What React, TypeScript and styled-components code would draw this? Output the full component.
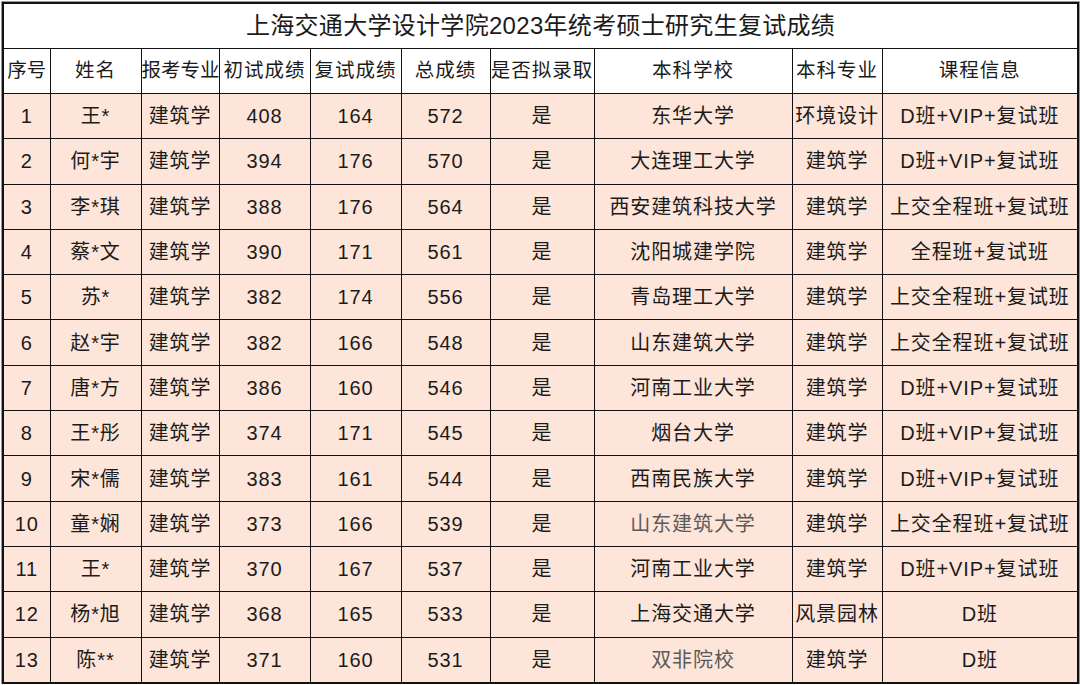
import React from 'react'
import styled, { createGlobalStyle } from 'styled-components'

const GlobalStyle = createGlobalStyle`
  html, body {
    margin: 0;
    padding: 0;
    background: #ffffff;
  }
  body {
    font-family: "Liberation Sans", "Noto Sans CJK SC", sans-serif;
  }
`

type Row = {
  no: number
  name: string
  major: string
  first: number
  retest: number
  total: number
  admit: string
  school: string
  schoolGray?: boolean
  degree: string
  course: string
}

const rows: Row[] = [
  { no: 1, name: '王*', major: '建筑学', first: 408, retest: 164, total: 572, admit: '是', school: '东华大学', degree: '环境设计', course: 'D班+VIP+复试班' },
  { no: 2, name: '何*宇', major: '建筑学', first: 394, retest: 176, total: 570, admit: '是', school: '大连理工大学', degree: '建筑学', course: 'D班+VIP+复试班' },
  { no: 3, name: '李*琪', major: '建筑学', first: 388, retest: 176, total: 564, admit: '是', school: '西安建筑科技大学', degree: '建筑学', course: '上交全程班+复试班' },
  { no: 4, name: '蔡*文', major: '建筑学', first: 390, retest: 171, total: 561, admit: '是', school: '沈阳城建学院', degree: '建筑学', course: '全程班+复试班' },
  { no: 5, name: '苏*', major: '建筑学', first: 382, retest: 174, total: 556, admit: '是', school: '青岛理工大学', degree: '建筑学', course: '上交全程班+复试班' },
  { no: 6, name: '赵*宇', major: '建筑学', first: 382, retest: 166, total: 548, admit: '是', school: '山东建筑大学', degree: '建筑学', course: '上交全程班+复试班' },
  { no: 7, name: '唐*方', major: '建筑学', first: 386, retest: 160, total: 546, admit: '是', school: '河南工业大学', degree: '建筑学', course: 'D班+VIP+复试班' },
  { no: 8, name: '王*彤', major: '建筑学', first: 374, retest: 171, total: 545, admit: '是', school: '烟台大学', degree: '建筑学', course: 'D班+VIP+复试班' },
  { no: 9, name: '宋*儒', major: '建筑学', first: 383, retest: 161, total: 544, admit: '是', school: '西南民族大学', degree: '建筑学', course: 'D班+VIP+复试班' },
  { no: 10, name: '童*娴', major: '建筑学', first: 373, retest: 166, total: 539, admit: '是', school: '山东建筑大学', schoolGray: true, degree: '建筑学', course: '上交全程班+复试班' },
  { no: 11, name: '王*', major: '建筑学', first: 370, retest: 167, total: 537, admit: '是', school: '河南工业大学', degree: '建筑学', course: 'D班+VIP+复试班' },
  { no: 12, name: '杨*旭', major: '建筑学', first: 368, retest: 165, total: 533, admit: '是', school: '上海交通大学', degree: '风景园林', course: 'D班' },
  { no: 13, name: '陈**', major: '建筑学', first: 371, retest: 160, total: 531, admit: '是', school: '双非院校', schoolGray: true, degree: '建筑学', course: 'D班' },
]

const columns = [
  { label: '序号', width: 47 },
  { label: '姓名', width: 91 },
  { label: '报考专业', width: 78 },
  { label: '初试成绩', width: 91 },
  { label: '复试成绩', width: 91 },
  { label: '总成绩', width: 89 },
  { label: '是否拟录取', width: 104 },
  { label: '本科学校', width: 198 },
  { label: '本科专业', width: 90 },
  { label: '课程信息', width: 196 },
]

const Page = styled.div`
  padding: 2px 0 0 2px;
`

const Table = styled.table`
  width: 1076px;
  table-layout: fixed;
  border-collapse: collapse;
  border: 2px solid #111;
  outline: 1px solid #9a9a9a;
  color: #1b1b1b;
`

const TitleCell = styled.td`
  height: 44px;
  padding: 0;
  background: #ffffff;
  border: 1.5px solid #111;
  text-align: center;
  font-size: 24px;
  line-height: 1;
  letter-spacing: 0.3px;
`

const HeadCell = styled.th<{ $tight?: boolean }>`
  height: 44px;
  padding: 0;
  background: #ffffff;
  border: 1.5px solid #111;
  text-align: center;
  font-weight: normal;
  font-size: 19.5px;
  line-height: 1;
  letter-spacing: ${(p) => (p.$tight ? '0' : '1px')};
  white-space: nowrap;
`

const Cell = styled.td<{ $muted?: boolean }>`
  height: 44.3px;
  padding: 0;
  background: #fde5d9;
  border: 1.5px solid #111;
  text-align: center;
  font-size: 20px;
  line-height: 1;
  letter-spacing: 0.9px;
  white-space: nowrap;
  color: ${(p) => (p.$muted ? '#5a5a5a' : '#1b1b1b')};
`

const App = () => {
  return (
    <Page>
      <GlobalStyle />
      <Table>
        <colgroup>
          {columns.map((c) => (
            <col key={c.label} style={{ width: c.width }} />
          ))}
        </colgroup>
        <thead>
          <tr>
            <TitleCell colSpan={columns.length}>上海交通大学设计学院2023年统考硕士研究生复试成绩</TitleCell>
          </tr>
          <tr>
            {columns.map((c) => (
              <HeadCell key={c.label} $tight={c.width < 80}>
                {c.label}
              </HeadCell>
            ))}
          </tr>
        </thead>
        <tbody>
          {rows.map((r) => (
            <tr key={r.no}>
              <Cell>{r.no}</Cell>
              <Cell>{r.name}</Cell>
              <Cell>{r.major}</Cell>
              <Cell>{r.first}</Cell>
              <Cell>{r.retest}</Cell>
              <Cell>{r.total}</Cell>
              <Cell>{r.admit}</Cell>
              <Cell $muted={r.schoolGray}>{r.school}</Cell>
              <Cell>{r.degree}</Cell>
              <Cell>{r.course}</Cell>
            </tr>
          ))}
        </tbody>
      </Table>
    </Page>
  )
}

export default App
